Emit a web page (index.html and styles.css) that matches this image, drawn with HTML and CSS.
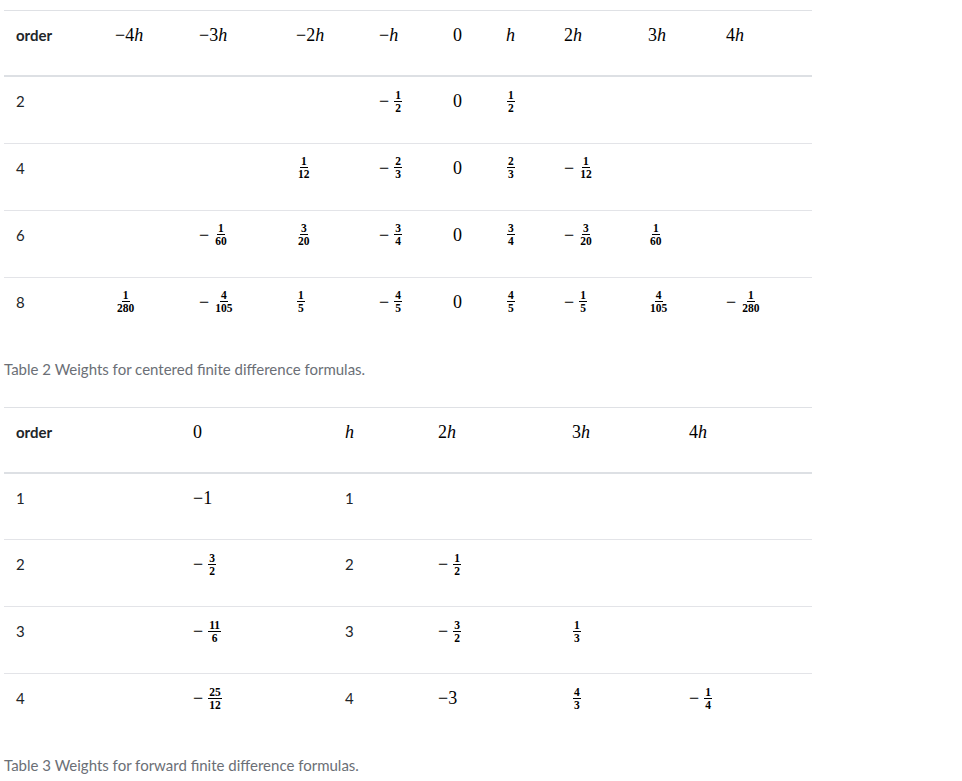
FILE: index.html
```html
<!DOCTYPE html>
<html lang="en">
<head>
<meta charset="utf-8">
<title>Finite difference weights</title>
<link rel="stylesheet" href="styles.css">
</head>
<body>
<div class="page">
  <figure class="tbl-fig">
    <table class="fd centered">
      <colgroup>
        <col style="width:99px"><col style="width:84px"><col style="width:97px"><col style="width:83px"><col style="width:74px"><col style="width:53px"><col style="width:58px"><col style="width:84px"><col style="width:78px"><col style="width:98px">
      </colgroup>
      <thead>
        <tr>
          <th>order</th>
          <th><span class="m">−4<i>h</i></span></th>
          <th><span class="m">−3<i>h</i></span></th>
          <th><span class="m">−2<i>h</i></span></th>
          <th><span class="m">−<i>h</i></span></th>
          <th><span class="m">0</span></th>
          <th><span class="m"><i>h</i></span></th>
          <th><span class="m">2<i>h</i></span></th>
          <th><span class="m">3<i>h</i></span></th>
          <th><span class="m">4<i>h</i></span></th>
        </tr>
      </thead>
      <tbody>
        <tr>
          <td>2</td><td></td><td></td><td></td>
          <td><span class="m"><span class="neg">−</span><span class="frac"><span class="num">1</span><span class="den">2</span></span></span></td>
          <td><span class="m">0</span></td>
          <td><span class="m"><span class="frac"><span class="num">1</span><span class="den">2</span></span></span></td>
          <td></td><td></td><td></td>
        </tr>
        <tr>
          <td>4</td><td></td><td></td>
          <td><span class="m"><span class="frac"><span class="num">1</span><span class="den">12</span></span></span></td>
          <td><span class="m"><span class="neg">−</span><span class="frac"><span class="num">2</span><span class="den">3</span></span></span></td>
          <td><span class="m">0</span></td>
          <td><span class="m"><span class="frac"><span class="num">2</span><span class="den">3</span></span></span></td>
          <td><span class="m"><span class="neg">−</span><span class="frac"><span class="num">1</span><span class="den">12</span></span></span></td>
          <td></td><td></td>
        </tr>
        <tr>
          <td>6</td><td></td>
          <td><span class="m"><span class="neg">−</span><span class="frac"><span class="num">1</span><span class="den">60</span></span></span></td>
          <td><span class="m"><span class="frac"><span class="num">3</span><span class="den">20</span></span></span></td>
          <td><span class="m"><span class="neg">−</span><span class="frac"><span class="num">3</span><span class="den">4</span></span></span></td>
          <td><span class="m">0</span></td>
          <td><span class="m"><span class="frac"><span class="num">3</span><span class="den">4</span></span></span></td>
          <td><span class="m"><span class="neg">−</span><span class="frac"><span class="num">3</span><span class="den">20</span></span></span></td>
          <td><span class="m"><span class="frac"><span class="num">1</span><span class="den">60</span></span></span></td>
          <td></td>
        </tr>
        <tr>
          <td>8</td>
          <td><span class="m"><span class="frac"><span class="num">1</span><span class="den">280</span></span></span></td>
          <td><span class="m"><span class="neg">−</span><span class="frac"><span class="num">4</span><span class="den">105</span></span></span></td>
          <td><span class="m"><span class="frac"><span class="num">1</span><span class="den">5</span></span></span></td>
          <td><span class="m"><span class="neg">−</span><span class="frac"><span class="num">4</span><span class="den">5</span></span></span></td>
          <td><span class="m">0</span></td>
          <td><span class="m"><span class="frac"><span class="num">4</span><span class="den">5</span></span></span></td>
          <td><span class="m"><span class="neg">−</span><span class="frac"><span class="num">1</span><span class="den">5</span></span></span></td>
          <td><span class="m"><span class="frac"><span class="num">4</span><span class="den">105</span></span></span></td>
          <td><span class="m"><span class="neg">−</span><span class="frac"><span class="num">1</span><span class="den">280</span></span></span></td>
        </tr>
      </tbody>
    </table>
    <figcaption class="caption">Table 2 Weights for centered finite difference formulas.</figcaption>
  </figure>

  <figure class="tbl-fig">
    <table class="fd forward">
      <colgroup>
        <col style="width:177px"><col style="width:152px"><col style="width:93px"><col style="width:134px"><col style="width:117px"><col style="width:135px">
      </colgroup>
      <thead>
        <tr>
          <th>order</th>
          <th><span class="m">0</span></th>
          <th><span class="m"><i>h</i></span></th>
          <th><span class="m">2<i>h</i></span></th>
          <th><span class="m">3<i>h</i></span></th>
          <th><span class="m">4<i>h</i></span></th>
        </tr>
      </thead>
      <tbody>
        <tr>
          <td>1</td>
          <td><span class="m">−1</span></td>
          <td>1</td>
          <td></td><td></td><td></td>
        </tr>
        <tr>
          <td>2</td>
          <td><span class="m"><span class="neg">−</span><span class="frac"><span class="num">3</span><span class="den">2</span></span></span></td>
          <td>2</td>
          <td><span class="m"><span class="neg">−</span><span class="frac"><span class="num">1</span><span class="den">2</span></span></span></td>
          <td></td><td></td>
        </tr>
        <tr>
          <td>3</td>
          <td><span class="m"><span class="neg">−</span><span class="frac"><span class="num">11</span><span class="den">6</span></span></span></td>
          <td>3</td>
          <td><span class="m"><span class="neg">−</span><span class="frac"><span class="num">3</span><span class="den">2</span></span></span></td>
          <td><span class="m"><span class="frac"><span class="num">1</span><span class="den">3</span></span></span></td>
          <td></td>
        </tr>
        <tr>
          <td>4</td>
          <td><span class="m"><span class="neg">−</span><span class="frac"><span class="num">25</span><span class="den">12</span></span></span></td>
          <td>4</td>
          <td><span class="m">−3</span></td>
          <td><span class="m"><span class="frac"><span class="num">4</span><span class="den">3</span></span></span></td>
          <td><span class="m"><span class="neg">−</span><span class="frac"><span class="num">1</span><span class="den">4</span></span></span></td>
        </tr>
      </tbody>
    </table>
    <figcaption class="caption">Table 3 Weights for forward finite difference formulas.</figcaption>
  </figure>
</div>
</body>
</html>
```

FILE: styles.css
```css
html, body {
  margin: 0;
  padding: 0;
  background: #ffffff;
}

body {
  font-family: Lato, "Open Sans", "Liberation Sans", sans-serif;
  font-size: 15px;
  color: #212529;
}

.page {
  padding: 10px 150px 0 4px;
}

.tbl-fig {
  margin: 0;
}

.fd {
  border-collapse: collapse;
  table-layout: fixed;
  width: 808px;
  border-top: 1px solid #dfe1e5;
}

.fd th,
.fd td {
  padding: 12px 12px 0 12px;
  line-height: 24px;
  vertical-align: top;
  text-align: left;
  white-space: nowrap;
}

.fd th {
  font-weight: 700;
}

.fd thead tr {
  height: 65.5px;
  border-bottom: 2px solid #dde0e4;
}

.fd.forward thead tr {
  height: 65px;
}

.fd tbody tr {
  height: 67px;
  border-bottom: 1px solid #e3e4e8;
}

.fd tbody tr:last-child {
  border-bottom: none;
}

.m {
  font-family: "Liberation Serif", "Times New Roman", Times, serif;
  font-size: 18px;
  font-weight: 400;
  color: #000;
  display: inline-flex;
  align-items: center;
  height: 24px;
  vertical-align: top;
}

.m i {
  font-family: "Liberation Serif", "Times New Roman", Times, serif;
  font-style: italic;
}

.neg {
  margin-right: 4px;
}

.frac {
  display: inline-flex;
  flex-direction: column;
  align-items: center;
  font-size: 11.5px;
  font-weight: 700;
  line-height: 10px;
  padding: 0 1px;
}

.frac .num {
  display: block;
  padding: 0 1px 1px;
  border-bottom: 1px solid #000;
}

.frac .den {
  display: block;
  padding: 1px 1px 0;
}

.caption {
  margin: 0;
  padding: 14px 0 27px 0;
  line-height: 22px;
  color: #6b6f76;
  font-size: 15px;
}

.tbl-fig + .tbl-fig .caption {
  padding-top: 13px;
  padding-bottom: 10px;
}
```
